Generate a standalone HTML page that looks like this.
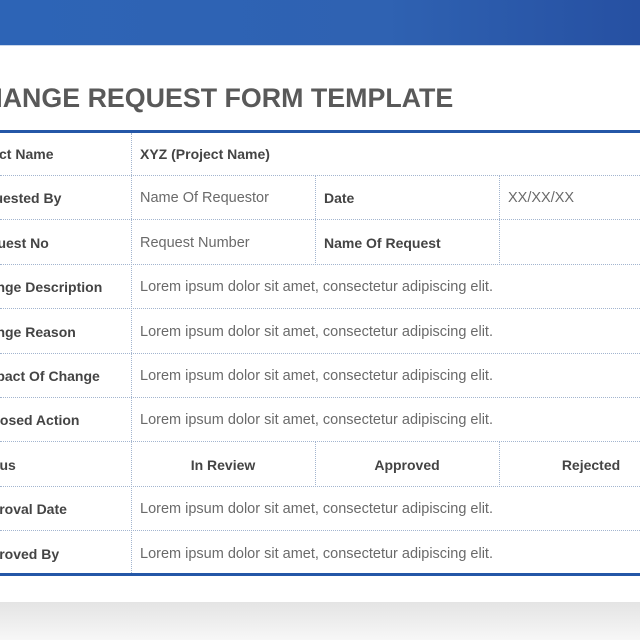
<!DOCTYPE html>
<html><head><meta charset="utf-8"><style>
*{margin:0;padding:0;box-sizing:border-box}
html,body{width:640px;height:640px;overflow:hidden}
body{background:#fff;font-family:"Liberation Sans",sans-serif;position:relative}
.top{position:absolute;left:0;top:0;width:640px;height:46px;background:linear-gradient(90deg,#2d64b6,#2f62b2 60%,#2650a2);border-bottom:1px solid #c9d6ea}
.bot{position:absolute;left:0;top:602px;width:640px;height:38px;background:linear-gradient(#e4e4e4,#f7f7f7)}
h1{position:absolute;left:-36px;top:83px;font-size:26.8px;font-weight:bold;color:#595959;white-space:nowrap}
.line{position:absolute;left:0;width:640px;height:3px;background:#2457a7}
.r{position:absolute;left:0;width:640px;border-bottom:1px dotted #a3b5cf}
.v{position:absolute;width:0;border-left:1px dotted #a3b5cf}
.t{position:absolute;white-space:nowrap;line-height:16px}
.b{font-weight:bold;color:#444;font-size:14px}
.n{color:#6a6a6a;font-size:14.5px}
</style></head><body>
<div class="top"></div>
<h1>CHANGE REQUEST FORM TEMPLATE</h1>
<div class="line" style="top:130px"></div>
<div class="line" style="top:573px"></div>
<div class="r" style="top:133px;height:43px"></div>
<div class="r" style="top:176px;height:44px"></div>
<div class="r" style="top:220px;height:45px"></div>
<div class="r" style="top:265px;height:44px"></div>
<div class="r" style="top:309px;height:45px"></div>
<div class="r" style="top:354px;height:44px"></div>
<div class="r" style="top:398px;height:44px"></div>
<div class="r" style="top:442px;height:45px"></div>
<div class="r" style="top:487px;height:44px"></div>
<div class="v" style="left:131px;top:133px;height:440px"></div>
<div class="v" style="left:315px;top:176px;height:89px"></div>
<div class="v" style="left:499px;top:176px;height:89px"></div>
<div class="v" style="left:315px;top:442px;height:45px"></div>
<div class="v" style="left:499px;top:442px;height:45px"></div>

<div class="t b" style="left:-36px;top:146px">Project Name</div>
<div class="t b" style="left:140px;top:146px">XYZ (Project Name)</div>
<div class="t b" style="left:-32px;top:190px">Requested By</div>
<div class="t b" style="left:324px;top:190px">Date</div>
<div class="t n" style="left:140px;top:190px">Name Of Requestor</div>
<div class="t n" style="left:508px;top:190px">XX/XX/XX</div>
<div class="t b" style="left:-29px;top:235px">Request No</div>
<div class="t n" style="left:140px;top:235px">Request Number</div>
<div class="t b" style="left:324px;top:235px">Name Of Request</div>
<div class="t b" style="left:-30px;top:279px">Change Description</div>
<div class="t n" style="left:140px;top:279px">Lorem ipsum dolor sit amet, consectetur adipiscing elit.</div>
<div class="t b" style="left:-30px;top:324px">Change Reason</div>
<div class="t n" style="left:140px;top:324px">Lorem ipsum dolor sit amet, consectetur adipiscing elit.</div>
<div class="t b" style="left:-20px;top:368px">Impact Of Change</div>
<div class="t n" style="left:140px;top:368px">Lorem ipsum dolor sit amet, consectetur adipiscing elit.</div>
<div class="t b" style="left:-32px;top:412px">Proposed Action</div>
<div class="t n" style="left:140px;top:412px">Lorem ipsum dolor sit amet, consectetur adipiscing elit.</div>
<div class="t b" style="left:-27px;top:457px">Status</div>
<div class="t b" style="left:131px;width:184px;text-align:center;top:457px">In Review</div>
<div class="t b" style="left:315px;width:184px;text-align:center;top:457px">Approved</div>
<div class="t b" style="left:499px;width:184px;text-align:center;top:457px">Rejected</div>
<div class="t b" style="left:-28px;top:501px">Approval Date</div>
<div class="t n" style="left:140px;top:501px">Lorem ipsum dolor sit amet, consectetur adipiscing elit.</div>
<div class="t b" style="left:-28px;top:546px">Approved By</div>
<div class="t n" style="left:140px;top:546px">Lorem ipsum dolor sit amet, consectetur adipiscing elit.</div>
<div class="bot"></div>
</body></html>
